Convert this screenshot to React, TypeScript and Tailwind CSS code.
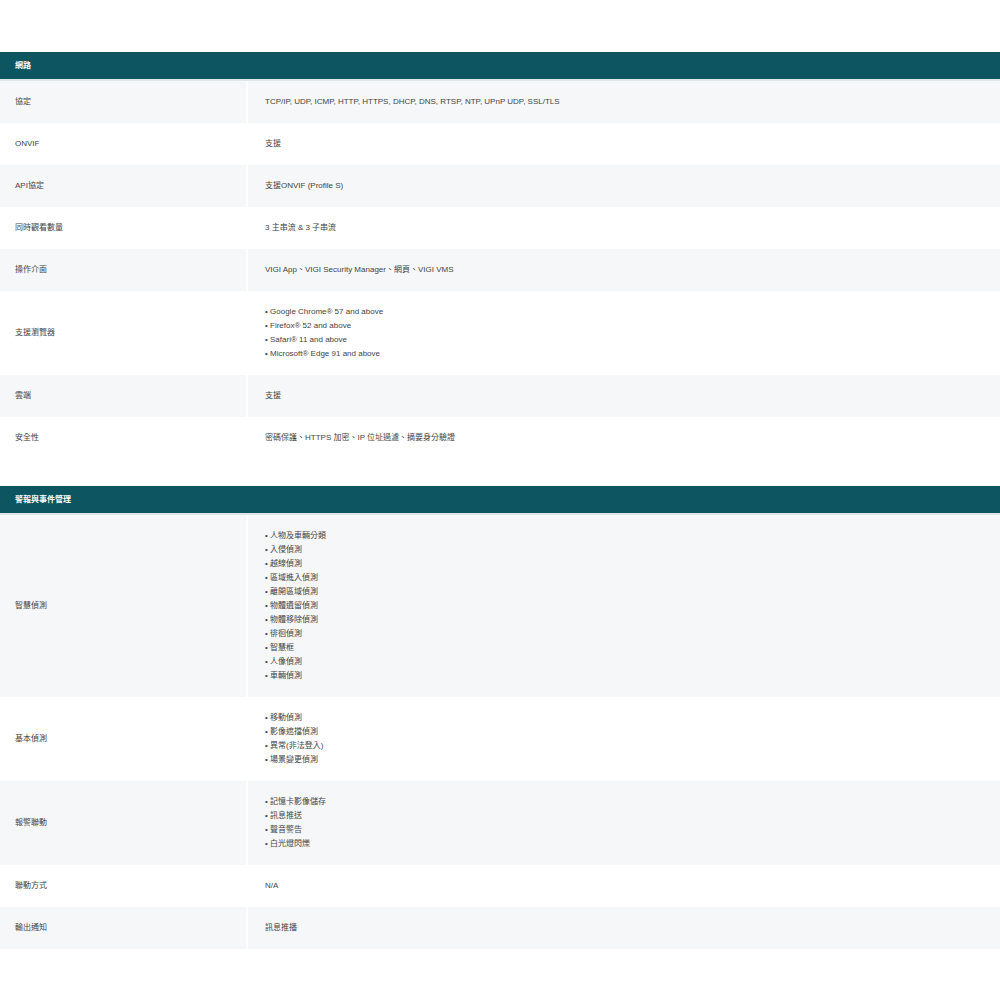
const net: [string, string | string[]][] = [
  ['協定', 'TCP/IP, UDP, ICMP, HTTP, HTTPS, DHCP, DNS, RTSP, NTP, UPnP UDP, SSL/TLS'],
  ['ONVIF', '支援'],
  ['API協定', '支援ONVIF (Profile S)'],
  ['同時觀看數量', '3 主串流 & 3 子串流'],
  ['操作介面', 'VIGI App、VIGI Security Manager、網頁、VIGI VMS'],
  ['支援瀏覽器', ['Google Chrome® 57 and above', 'Firefox® 52 and above', 'Safari® 11 and above', 'Microsoft® Edge 91 and above']],
  ['雲端', '支援'],
  ['安全性', '密碼保護、HTTPS 加密、IP 位址過濾、摘要身分驗證'],
];

const alarm: [string, string | string[]][] = [
  ['智慧偵測', ['人物及車輛分類', '入侵偵測', '越線偵測', '區域進入偵測', '離開區域偵測', '物體遺留偵測', '物體移除偵測', '徘徊偵測', '智慧框', '人像偵測', '車輛偵測']],
  ['基本偵測', ['移動偵測', '影像遮擋偵測', '異常(非法登入)', '場景變更偵測']],
  ['報警聯動', ['記憶卡影像儲存', '訊息推送', '聲音警告', '白光燈閃爍']],
  ['聯動方式', 'N/A'],
  ['輸出通知', '訊息推播'],
];

function Section({ title, rows }: { title: string; rows: [string, string | string[]][] }) {
  return (
    <div>
      <div className="h-[29px] bg-[#0d5561] flex items-center px-[15px] text-white font-bold text-[8px] border-b-2 border-[#dfe6e8]">{title}</div>
      {rows.map(([k, v], i) => (
        <div key={k} className={`flex ${i % 2 === 0 ? 'bg-[#f6f7f8]' : 'bg-white'}`}>
          <div className="w-[248px] flex items-center px-[15px] border-r-2 border-white">{k}</div>
          <div className={`flex-1 px-[17px] flex flex-col justify-center ${Array.isArray(v) ? 'py-[14px] min-h-[42px]' : 'h-[42px]'}`}>
            {Array.isArray(v) ? v.map((s) => <div key={s} className="leading-[14px]">• {s}</div>) : v}
          </div>
        </div>
      ))}
    </div>
  );
}

export default function App() {
  return (
    <div className="w-[1000px] h-[1000px] bg-white pt-[52px] text-[8px] text-[#444]" style={{ fontFamily: '"Liberation Sans", "Noto Sans CJK TC", sans-serif' }}>
      <Section title="網路" rows={net} />
      <div className="h-[27px]" />
      <Section title="警報與事件管理" rows={alarm} />
    </div>
  );
}
